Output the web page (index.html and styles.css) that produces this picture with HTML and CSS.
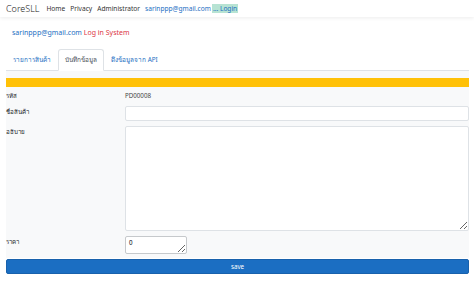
FILE: index.html
```html
<!DOCTYPE html>
<html lang="th">
<head>
  <meta charset="UTF-8" />
  <meta name="viewport" content="width=device-width, initial-scale=1.0" />
  <title>CoreSLL</title>
  <link rel="stylesheet" href="styles.css">
</head>
<body>
  <nav class="navbar">
    <span class="brand">CoreSLL</span>
    <a class="nav-link" href="#">Home</a>
    <a class="nav-link" href="#">Privacy</a>
    <a class="nav-link" href="#">Administrator</a>
    <span class="nav-user">sarinppp@gmail.com</span>
    <a class="nav-login" href="#">... Login</a>
  </nav>

  <main class="content">
    <div class="user-line">
      <span class="user-mail">sarinppp@gmail.com</span>
      <span class="user-state">Log in System</span>
    </div>

    <ul class="tabs">
      <li class="tab">รายการสินค้า</li>
      <li class="tab active">บันทึกข้อมูล</li>
      <li class="tab">ดึงข้อมูลจาก API</li>
    </ul>

    <div class="panel">
      <div class="warn-bar"></div>
      <div class="row static">
        <label>รหัส</label>
        <div class="value">PD00008</div>
      </div>
      <div class="row">
        <label>ชื่อสินค้า</label>
        <input class="field" type="text">
      </div>
      <div class="row">
        <label>อธิบาย</label>
        <textarea class="field desc"></textarea>
      </div>
      <div class="row">
        <label>ราคา</label>
        <textarea class="field price">0</textarea>
      </div>
    </div>

    <button class="save">save</button>
  </main>
</body>
</html>
```

FILE: styles.css
```css
body {
  margin: 0;
  background-color: #fff;
  color: #212529;
  font-family: "Noto Sans", "Liberation Sans", sans-serif;
  font-size: 7px;
}
a {
  text-decoration: none;
}
.navbar {
  display: flex;
  align-items: center;
  height: 17px;
  padding-left: 6px;
  background-color: #fff;
  box-shadow: 0 1px 4px rgba(0, 0, 0, 0.08);
  font-size: 6.6px;
}
.brand {
  font-size: 9px;
  font-weight: 300;
  color: #222;
  margin-right: 7px;
}
.nav-link {
  color: #333;
  margin-right: 5px;
}
.nav-user {
  color: #1b6ec2;
  margin-right: 1px;
}
.nav-login {
  color: #1b6ec2;
  background-color: #b7e3d3;
  padding: 0 1px;
}
.content {
  padding: 0 5px 0 6px;
}
.user-line {
  margin-top: 11px;
  padding-left: 6px;
  font-size: 7px;
}
.user-mail {
  color: #1b6ec2;
}
.user-state {
  color: #dc3545;
}
.tabs {
  display: flex;
  list-style: none;
  margin: 12px 0 0;
  padding: 0;
  border-bottom: 1px solid #dee2e6;
  font-size: 6.4px;
}
.tab {
  padding: 5px 6px 5px;
  margin-bottom: -1px;
  color: #1b6ec2;
  border: 1px solid transparent;
  border-radius: 3px 3px 0 0;
}
.tab.active {
  color: #495057;
  background-color: #fff;
  border-color: #dee2e6 #dee2e6 #fff;
}
.panel {
  background-color: #f8f9fa;
  padding: 7px 0 4px;
}
.warn-bar {
  height: 9px;
  background-color: #ffc107;
  margin-bottom: 3px;
}
.row {
  display: grid;
  grid-template-columns: 119px 1fr;
  align-items: start;
  margin-bottom: 5px;
}
.row:last-child {
  margin-bottom: 0;
}
.row.static {
  height: 11px;
}
.row label {
  font-size: 6.2px;
  padding-top: 1px;
}
.value {
  font-size: 6.2px;
  padding-top: 1px;
  color: #444;
}
.field {
  box-sizing: border-box;
  height: 15px;
  margin: 0;
  border: 1px solid #dee2e6;
  border-radius: 2px;
  background-color: #fff;
  font-family: inherit;
  font-size: 6.2px;
}
.desc {
  height: 105px;
  resize: vertical;
}
.price {
  width: 62px;
  height: 18px;
  padding: 1px 3px;
  border-color: #c6c9cc;
}
.save {
  display: block;
  width: 100%;
  height: 15px;
  margin-top: 1px;
  border: 1px solid #1861ac;
  border-radius: 2px;
  background-color: #1b6ec2;
  color: #fff;
  font-family: inherit;
  font-size: 6.2px;
}
```
